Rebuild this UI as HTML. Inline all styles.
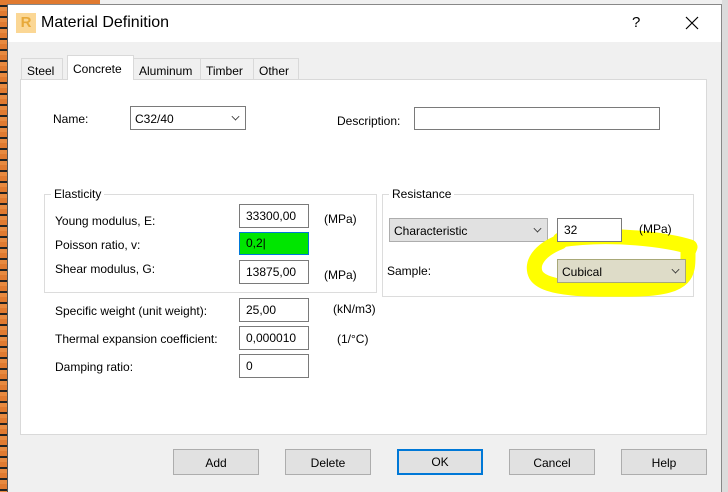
<!DOCTYPE html>
<html><head><style>
*{box-sizing:border-box;margin:0;padding:0}
body{width:728px;height:492px;overflow:hidden;position:relative;background:#f0f0f0;font-family:"Liberation Sans",sans-serif;font-size:12px;color:#000}
.a{position:absolute}
.box{position:absolute;background:#fff;border:1px solid #7a7a7a;padding:4px 0 0 6px;font-size:12px}
.cmb{position:absolute;background:#e1e1e1;border:1px solid #adadad;padding:5px 0 0 4px;font-size:12px}
.cmb.w{background:#fff;border-color:#7a7a7a}
.chev{position:absolute;right:6px;top:6px;width:7px;height:7px;border-right:1px solid #333;border-bottom:1px solid #333;transform:rotate(45deg) scale(.8)}
.btn{position:absolute;top:449px;width:86px;height:26px;background:#e1e1e1;border:1px solid #adadad;text-align:center;line-height:26px;font-size:12px}
.lbl{position:absolute;font-size:12px}
.grp{position:absolute;border:1px solid #dcdcdc}
.gt{position:absolute;top:-8px;left:6px;background:#fff;padding:0 3px;font-size:12px}
.tab{position:absolute;top:58px;height:22px;background:#f0f0f0;border:1px solid #d9d9d9;padding:5px 5px 0;font-size:12px}
</style></head><body>
<div class="a" style="left:0;top:0;width:7px;height:492px;background:repeating-linear-gradient(180deg,#e07a30 0 5px,#222 5px 7px,#e88a40 7px 11px)"></div>
<div class="a" style="left:0;top:0;width:100px;height:4px;background:#e07a30"></div>
<div class="a" style="left:722px;top:0;width:6px;height:492px;background:#dcdcdc"></div>
<div class="a" style="left:7px;top:4px;width:715px;height:488px;background:#f0f0f0;border-left:1px solid #555;border-right:1px solid #888;border-top:1px solid #888"></div>
<div class="a" style="left:8px;top:5px;width:713px;height:37px;background:#fff"></div>
<div class="a" style="left:16px;top:13px;width:20px;height:20px;background:#fbd795;color:#e7a93a;font-weight:bold;font-size:15px;text-align:center;line-height:20px">R</div>
<div class="a" style="left:41px;top:14px;font-size:16px">Material Definition</div>
<div class="a" style="left:632px;top:14px;font-size:15px">?</div>
<svg class="a" style="left:685px;top:16px" width="14" height="14"><path d="M1 1L13 13M13 1L1 13" stroke="#000" stroke-width="1.2"/></svg>
<div class="a" style="left:20px;top:79px;width:687px;height:356px;background:#fff;border:1px solid #d9d9d9"></div>
<div class="tab" style="left:21px;width:42px">Steel</div>
<div class="tab" style="left:67px;top:55px;height:25px;width:67px;background:#fff;border-bottom:none;padding-top:6px">Concrete</div>
<div class="tab" style="left:133px;width:68px">Aluminum</div>
<div class="tab" style="left:200px;width:54px">Timber</div>
<div class="tab" style="left:253px;width:46px">Other</div>
<div class="lbl" style="left:53px;top:112px">Name:</div>
<div class="cmb w" style="left:130px;top:106px;width:116px;height:24px">C32/40<span class="chev"></span></div>
<div class="lbl" style="left:337px;top:114px">Description:</div>
<div class="box" style="left:414px;top:107px;width:246px;height:23px"></div>
<div class="grp" style="left:44px;top:194px;width:333px;height:99px"><span class="gt">Elasticity</span></div>
<div class="lbl" style="left:55px;top:214px">Young modulus, E:</div>
<div class="lbl" style="left:55px;top:238px">Poisson ratio, v:</div>
<div class="lbl" style="left:55px;top:262px">Shear modulus, G:</div>
<div class="box" style="left:239px;top:204px;width:70px;height:24px">33300,00</div>
<div class="box" style="left:239px;top:232px;width:70px;height:23px;border-color:#0078d7;background:#00e600;padding:3px 0 0 6px">0,2|</div>
<div class="box" style="left:239px;top:260px;width:70px;height:24px">13875,00</div>
<div class="lbl" style="left:324px;top:212px">(MPa)</div>
<div class="lbl" style="left:324px;top:268px">(MPa)</div>
<div class="lbl" style="left:55px;top:304px">Specific weight (unit weight):</div>
<div class="lbl" style="left:55px;top:332px">Thermal expansion coefficient:</div>
<div class="lbl" style="left:55px;top:360px">Damping ratio:</div>
<div class="box" style="left:239px;top:298px;width:70px;height:24px">25,00</div>
<div class="box" style="left:239px;top:326px;width:70px;height:24px">0,000010</div>
<div class="box" style="left:239px;top:354px;width:70px;height:24px">0</div>
<div class="lbl" style="left:333px;top:302px">(kN/m3)</div>
<div class="lbl" style="left:337px;top:332px">(1/°C)</div>
<div class="grp" style="left:382px;top:194px;width:312px;height:103px"><span class="gt">Resistance</span></div>
<div class="cmb" style="left:389px;top:218px;width:159px;height:24px">Characteristic<span class="chev"></span></div>
<svg class="a" style="left:0;top:0" width="728" height="492"><path d="M560 240 C610 232,670 240,690 247 L688 252 C688 272,690 287,640 289 C590 290,545 290,536 275 C530 263,540 250,560 242" fill="none" stroke="#ffff00" stroke-width="15" stroke-linejoin="round" stroke-linecap="round"/></svg>
<div class="box" style="left:557px;top:218px;width:65px;height:24px">32</div>
<div class="lbl" style="left:639px;top:222px">(MPa)</div>
<div class="lbl" style="left:387px;top:264px">Sample:</div>
<div class="cmb" style="left:557px;top:259px;width:129px;height:24px;background:#dedcc8;border-color:#a8a878">Cubical<span class="chev"></span></div>
<div class="btn" style="left:173px">Add</div>
<div class="btn" style="left:285px">Delete</div>
<div class="btn" style="left:397px;border:2px solid #0078d7;line-height:22px">OK</div>
<div class="btn" style="left:509px">Cancel</div>
<div class="btn" style="left:621px">Help</div>
</body></html>
